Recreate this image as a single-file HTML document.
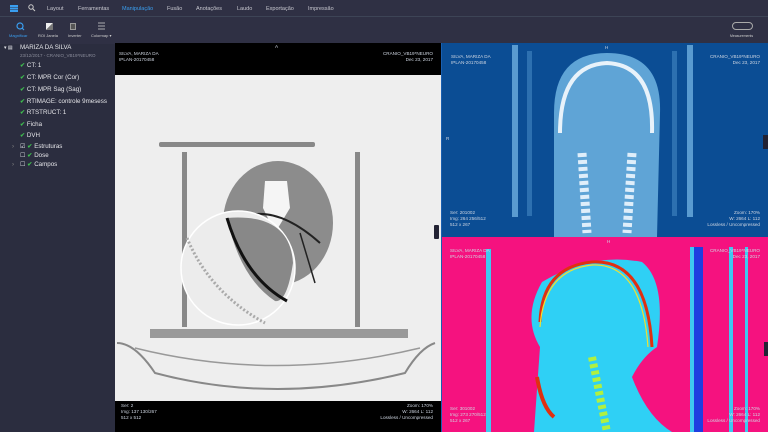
<!DOCTYPE html>
<html><head><meta charset="utf-8"><style>
*{margin:0;padding:0;box-sizing:border-box}
body{width:768px;height:432px;overflow:hidden;background:#2c2e40;font-family:"Liberation Sans",sans-serif;color:#ddd;position:relative}
.nav{position:absolute;left:0;top:0;width:768px;height:17px;background:#2f3044;border-bottom:1px solid #3d4456;font-size:5.5px;color:#c8c8d0}
.nav span{position:absolute;top:6px}
.tb{position:absolute;left:0;top:17px;width:768px;height:27px;background:#2f3044;font-size:4px;color:#ccc}
.side{position:absolute;left:0;top:44px;width:115px;height:388px;background:#2b2d3f;font-size:6.2px;color:#e6e6ea}
.side div{position:absolute;white-space:nowrap}
.ck{color:#3fbf4f;font-weight:bold}
.ov{position:absolute;font-size:4.6px;color:#cfd6e2;line-height:6px;white-space:nowrap}
.r{text-align:right}
</style></head><body>
<div class="nav">
<div style="position:absolute;left:10px;top:5px;width:8px;height:1.5px;background:#3a9ef0;box-shadow:0 2.5px #3a9ef0,0 5px #3a9ef0"></div>
<svg width="8" height="8" style="position:absolute;left:28px;top:4px"><circle cx="3" cy="3" r="2.2" fill="none" stroke="#ccc" stroke-width="1"/><line x1="4.6" y1="4.6" x2="7" y2="7" stroke="#ccc" stroke-width="1"/></svg>
<span style="left:47px">Layout</span><span style="left:78px">Ferramentas</span>
<span style="left:122px;color:#3a9ef0">Manipulação</span><span style="left:167px">Fusão</span>
<span style="left:196px">Anotações</span><span style="left:237px">Laudo</span>
<span style="left:266px">Exportação</span><span style="left:308px">Impressão</span>
</div>
<div class="tb">
<svg width="120" height="14" style="position:absolute;left:14px;top:4px">
<circle cx="6" cy="5" r="3" fill="none" stroke="#3a9ef0" stroke-width="1.2"/><line x1="8" y1="7" x2="10" y2="9" stroke="#3a9ef0" stroke-width="1.2"/>
<polygon points="32,2 39,2 32,9" fill="#eee"/><polygon points="39,2 39,9 32,9" fill="#777"/>
<rect x="56" y="2" width="6" height="7" fill="#999"/><rect x="57" y="3" width="4" height="5" fill="#555"/>
<g stroke="#ccc" stroke-width="0.8"><line x1="84" y1="2" x2="91" y2="2"/><line x1="84" y1="5" x2="91" y2="5"/><line x1="84" y1="8" x2="91" y2="8"/></g>
</svg>
<span style="position:absolute;left:9px;top:16px;color:#3a9ef0">Magnificar</span>
<span style="position:absolute;left:38px;top:16px">ROI Janela</span>
<span style="position:absolute;left:68px;top:16px">Inverter</span>
<span style="position:absolute;left:91px;top:16px">Colormap ▾</span>
<div style="position:absolute;left:732px;top:5px;width:21px;height:8px;border:1px solid #aaa;border-radius:4px"></div>
<span style="position:absolute;left:730px;top:17px;font-size:3.5px">Measurements</span>
</div>
<div class="side">
<div style="left:4px;top:1px;font-size:5px">▾ ▤</div>
<div style="left:20px;top:0px">MARIZA DA SILVA</div>
<div style="left:20px;top:9px;font-size:4.5px;color:#8a8c9a">23/12/2017 - CRANIO_VB19*NEURO</div>
<div style="left:20px;top:18px"><span class="ck">✔</span> CT: 1</div>
<div style="left:20px;top:30px"><span class="ck">✔</span> CT: MPR Cor (Cor)</div>
<div style="left:20px;top:42px"><span class="ck">✔</span> CT: MPR Sag (Sag)</div>
<div style="left:20px;top:54px"><span class="ck">✔</span> RTIMAGE: controle 9mesess</div>
<div style="left:20px;top:65px"><span class="ck">✔</span> RTSTRUCT: 1</div>
<div style="left:20px;top:77px"><span class="ck">✔</span> Ficha</div>
<div style="left:20px;top:88px"><span class="ck">✔</span> DVH</div>
<div style="left:12px;top:99px;color:#888">›</div><div style="left:20px;top:99px">☑ <span class="ck">✔</span> Estruturas</div>
<div style="left:20px;top:108px">☐ <span class="ck">✔</span> Dose</div>
<div style="left:12px;top:117px;color:#888">›</div><div style="left:20px;top:117px">☐ <span class="ck">✔</span> Campos</div>
</div>
<!-- left viewport -->
<div style="position:absolute;left:115px;top:43px;width:326px;height:389px;background:#000">
<svg width="326" height="389" style="position:absolute;left:0;top:0">
<rect x="0" y="32" width="326" height="326" fill="#eeeeee"/>
<rect x="44" y="99" width="156" height="5" rx="2" fill="#888"/>
<rect x="67" y="109" width="5" height="175" fill="#888"/><rect x="240" y="109" width="5" height="175" fill="#888"/>
<ellipse cx="163" cy="180" rx="55" ry="62" fill="#8c8c8c"/>
<path d="M150 138 L172 138 L175 165 L160 190 L148 165Z" fill="#f5f5f5"/>
<path d="M125 175 Q160 160 205 200" stroke="#222" stroke-width="2" fill="none"/>
<path d="M185 190 L200 240" stroke="#222" stroke-width="1.5" fill="none"/>
<rect x="35" y="286" width="258" height="9" fill="#999"/>
<path d="M2 300 Q20 300 40 330 Q160 362 290 330 Q305 305 320 300" fill="none" stroke="#888" stroke-width="2"/>
<path d="M20 305 Q160 340 305 305" fill="none" stroke="#999" stroke-width="1.5"/>
<circle cx="123" cy="225" r="57" fill="#ececec" stroke="#fff" stroke-width="1.5"/>
<path d="M112 175 Q175 170 178 220 Q172 260 160 258 Q125 235 112 175Z" fill="#888"/>
<path d="M112 175 Q130 235 172 258" stroke="#111" stroke-width="3" fill="none"/>
<path d="M72 195 Q95 250 150 280" stroke="#aaa" stroke-width="3" fill="none" stroke-dasharray="2 2"/>
<rect x="319" y="182" width="5" height="14" rx="1" fill="#223"/>
</svg>
<div class="ov" style="left:4px;top:8px">SILVA, MARIZA DA<br>IPLAN-20170458</div>
<div class="ov" style="left:160px;top:1px">A</div>
<div class="ov r" style="right:8px;top:8px">CRANIO_VB19*NEURO<br>Dec 23, 2017</div>
<div class="ov" style="left:6px;top:360px">Ser: 2<br>Img: 137 130/267<br>512 x 512</div>
<div class="ov r" style="right:8px;top:360px">Zoom: 170%<br>W: 2664 L: 112<br>Lossless / Uncompressed</div>
</div>
<!-- right top -->
<div style="position:absolute;left:441px;top:43px;width:327px;height:194px;background:#0b4d94;border-left:1px solid #1a5fb0">
<svg width="327" height="194" style="position:absolute;left:0;top:0">
<rect x="70" y="2" width="6" height="172" fill="#5a9bd0"/><rect x="245" y="2" width="6" height="172" fill="#5a9bd0"/>
<rect x="85" y="8" width="5" height="165" fill="#2d70b0"/><rect x="230" y="8" width="5" height="165" fill="#2d70b0"/>
<path d="M112 194 L112 70 Q112 10 165 10 Q220 10 218 70 L215 194Z" fill="#5fa4d6"/>
<path d="M118 90 Q118 22 165 20 Q212 22 210 90" stroke="#e8f2fa" stroke-width="4" fill="none"/>
<path d="M140 110 L145 190 M190 110 L185 190" stroke="#dfeefa" stroke-width="9" stroke-dasharray="4 3"/>
<rect x="321" y="92" width="5" height="14" fill="#223"/>
</svg>
<div class="ov" style="left:9px;top:11px">SILVA, MARIZA DA<br>IPLAN-20170458</div>
<div class="ov" style="left:163px;top:2px">H</div><div class="ov" style="left:4px;top:93px">R</div>
<div class="ov r" style="right:8px;top:11px">CRANIO_VB19*NEURO<br>Dec 23, 2017</div>
<div class="ov" style="left:8px;top:167px">Ser: 201002<br>Img: 264 256/512<br>512 x 267</div>
<div class="ov r" style="right:8px;top:167px">Zoom: 170%<br>W: 2664 L: 112<br>Lossless / Uncompressed</div>
</div>
<!-- right bottom -->
<div style="position:absolute;left:441px;top:237px;width:327px;height:195px;background:#f5127f;border-left:1px solid #1a5fb0">
<svg width="327" height="195" style="position:absolute;left:0;top:0">
<rect x="44" y="12" width="5" height="183" fill="#3fc8f0"/>
<rect x="248" y="10" width="13" height="185" fill="#1f3de0"/><rect x="248" y="10" width="4" height="185" fill="#3fc8f0"/>
<rect x="287" y="10" width="4" height="185" fill="#3fc8f0"/><rect x="303" y="10" width="3" height="185" fill="#3fc8f0"/>
<path d="M92 195 L98 110 Q80 80 100 45 Q150 15 200 25 Q225 45 215 110 Q200 120 190 140 Q205 180 230 195Z" fill="#2fd0f5"/>
<path d="M98 85 Q100 30 150 25 Q205 22 210 110" stroke="#e03010" stroke-width="3" fill="none"/>
<path d="M98 90 Q102 33 150 28 Q200 26 206 110" stroke="#f0e030" stroke-width="1.2" fill="none"/>
<path d="M95 140 Q100 170 112 180" stroke="#e03010" stroke-width="4" fill="none"/>
<path d="M150 120 L165 195" stroke="#b0f040" stroke-width="8" stroke-dasharray="4 3"/>
<rect x="322" y="105" width="4" height="14" fill="#223"/>
</svg>
<div class="ov" style="left:8px;top:11px">SILVA, MARIZA DA<br>IPLAN-20170458</div>
<div class="ov" style="left:165px;top:2px">H</div>
<div class="ov r" style="right:8px;top:11px">CRANIO_VB19*NEURO<br>Dec 23, 2017</div>
<div class="ov" style="left:8px;top:169px">Ser: 301002<br>Img: 273 270/512<br>512 x 267</div>
<div class="ov r" style="right:8px;top:169px">Zoom: 170%<br>W: 2664 L: 112<br>Lossless / Uncompressed</div>
</div>
</body></html>
